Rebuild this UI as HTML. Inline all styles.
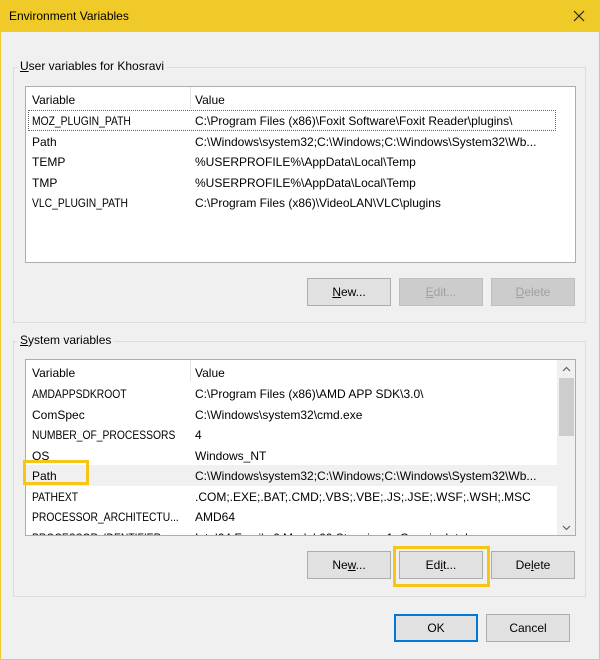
<!DOCTYPE html>
<html><head><style>
*{box-sizing:border-box;margin:0;padding:0}
body{width:600px;height:660px;background:#f0f0f0;font-family:"Liberation Sans",sans-serif;font-size:12px;color:#000;position:relative;overflow:hidden}
.abs{position:absolute}
.frame{left:0;top:0;width:600px;height:660px;border:1px solid #f0ca28}
.title{left:0;top:0;width:600px;height:32px;background:#f0ca28}
.group{border:1px solid #dcdcdc}
.glabel{background:#f0f0f0;padding:0 3px;font-size:12px}
.list{background:#fff;border:1px solid #adadad}
.t{position:absolute;white-space:nowrap}
.c{transform:scaleX(0.86);transform-origin:left top}
.btn{position:absolute;height:28px;width:84px;background:#e1e1e1;border:1px solid #adadad;text-align:center;line-height:26px}
.dis{background:#cccccc;border-color:#bfbfbf;color:#a0a0a0}
.hdrsep{position:absolute;width:1px;background:#e5e5e5}
</style></head><body>
<div class="abs title"></div>
<div class="abs t" style="left:9px;top:9px;font-size:12px">Environment Variables</div>
<svg class="abs" style="left:573px;top:10px" width="12" height="12"><path d="M1 1L11 11M11 1L1 11" stroke="#222" stroke-width="1.2"/></svg>
<div class="abs frame"></div>

<div class="abs group" style="left:13px;top:67px;width:573px;height:256px"></div>
<div class="abs glabel" style="left:17px;top:59px"><u>U</u>ser variables for Khosravi</div>
<div class="abs list" style="left:25px;top:86px;width:551px;height:177px">
 <div class="hdrsep" style="left:164px;top:0;height:22px"></div>
 <div class="t" style="left:6px;top:6px">Variable</div>
 <div class="t" style="left:169px;top:6px">Value</div>
 <div class="abs" style="left:2px;top:23px;width:528px;height:21px;border:1px dotted #666"></div>
 <div class="t c" style="left:6px;top:27px">MOZ_PLUGIN_PATH</div><div class="t" style="left:169px;top:27px">C:\Program Files (x86)\Foxit Software\Foxit Reader\plugins\</div>
 <div class="t" style="left:6px;top:48px">Path</div><div class="t" style="left:169px;top:48px">C:\Windows\system32;C:\Windows;C:\Windows\System32\Wb...</div>
 <div class="t" style="left:6px;top:68px">TEMP</div><div class="t" style="left:169px;top:68px">%USERPROFILE%\AppData\Local\Temp</div>
 <div class="t" style="left:6px;top:89px">TMP</div><div class="t" style="left:169px;top:89px">%USERPROFILE%\AppData\Local\Temp</div>
 <div class="t c" style="left:6px;top:109px">VLC_PLUGIN_PATH</div><div class="t" style="left:169px;top:109px">C:\Program Files (x86)\VideoLAN\VLC\plugins</div>
</div>
<div class="btn" style="left:307px;top:278px"><u>N</u>ew...</div>
<div class="btn dis" style="left:399px;top:278px"><u>E</u>dit...</div>
<div class="btn dis" style="left:491px;top:278px"><u>D</u>elete</div>

<div class="abs group" style="left:13px;top:341px;width:573px;height:256px"></div>
<div class="abs glabel" style="left:17px;top:333px"><u>S</u>ystem variables</div>
<div class="abs list" style="left:25px;top:359px;width:551px;height:177px;overflow:hidden">
 <div class="hdrsep" style="left:164px;top:0;height:22px"></div>
 <div class="t" style="left:6px;top:6px">Variable</div>
 <div class="t" style="left:169px;top:6px">Value</div>
 <div class="abs" style="left:0;top:105px;width:531px;height:21px;background:#f0f0f0"></div>
 <div class="t c" style="left:6px;top:27px">AMDAPPSDKROOT</div><div class="t" style="left:169px;top:27px">C:\Program Files (x86)\AMD APP SDK\3.0\</div>
 <div class="t" style="left:6px;top:48px">ComSpec</div><div class="t" style="left:169px;top:48px">C:\Windows\system32\cmd.exe</div>
 <div class="t c" style="left:6px;top:68px">NUMBER_OF_PROCESSORS</div><div class="t" style="left:169px;top:68px">4</div>
 <div class="t" style="left:6px;top:89px">OS</div><div class="t" style="left:169px;top:89px">Windows_NT</div>
 <div class="t" style="left:6px;top:109px">Path</div><div class="t" style="left:169px;top:109px">C:\Windows\system32;C:\Windows;C:\Windows\System32\Wb...</div>
 <div class="t c" style="left:6px;top:130px">PATHEXT</div><div class="t" style="left:169px;top:130px">.COM;.EXE;.BAT;.CMD;.VBS;.VBE;.JS;.JSE;.WSF;.WSH;.MSC</div>
 <div class="t c" style="left:6px;top:150px">PROCESSOR_ARCHITECTU...</div><div class="t" style="left:169px;top:150px">AMD64</div>
 <div class="t c" style="left:6px;top:171px">PROCESSOR_IDENTIFIER</div><div class="t" style="left:169px;top:171px">Intel64 Family 6 Model 60 Stepping 1, GenuineIntel</div>
 <div class="abs" style="left:531px;top:0;width:19px;height:175px;background:#f0f0f0"></div>
 <div class="abs" style="left:533px;top:18px;width:15px;height:58px;background:#cdcdcd"></div>
 <svg class="abs" style="left:536px;top:6px" width="9" height="6"><path d="M1 5L4.5 1.5L8 5" stroke="#606060" fill="none" stroke-width="1.2"/></svg>
 <svg class="abs" style="left:536px;top:165px" width="9" height="6"><path d="M1 1L4.5 4.5L8 1" stroke="#606060" fill="none" stroke-width="1.2"/></svg>
</div>
<div class="abs" style="left:23px;top:460px;width:66px;height:25px;border:3px solid #f5c518"></div>
<div class="btn" style="left:307px;top:551px">Ne<u>w</u>...</div>
<div class="btn" style="left:399px;top:551px">Ed<u>i</u>t...</div>
<div class="btn" style="left:491px;top:551px">De<u>l</u>ete</div>
<div class="abs" style="left:393px;top:546px;width:97px;height:41px;border:3px solid #f5c518"></div>

<div class="btn" style="left:394px;top:614px;border:2px solid #0078d7;line-height:24px">OK</div>
<div class="btn" style="left:486px;top:614px">Cancel</div>
</body></html>
